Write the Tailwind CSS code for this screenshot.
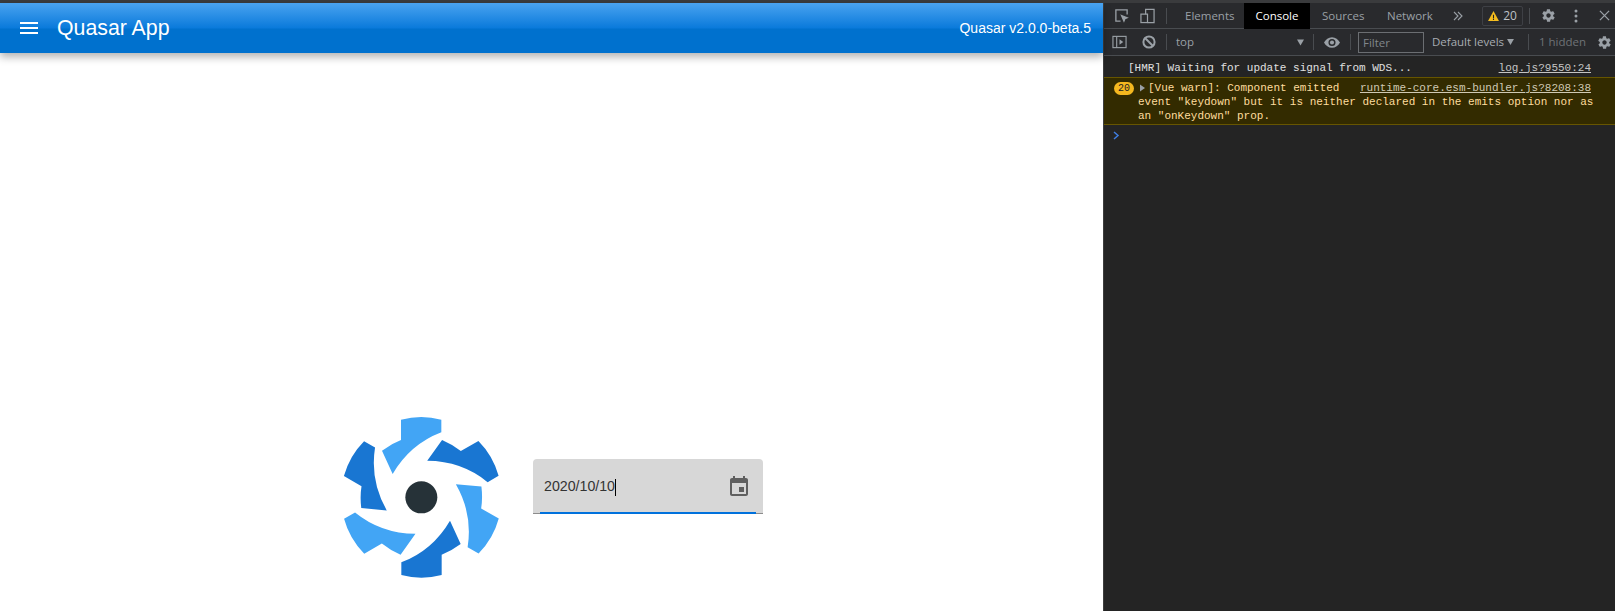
<!DOCTYPE html>
<html>
<head>
<meta charset="utf-8">
<script src="https://cdn.jsdelivr.net/npm/@tailwindcss/browser@4"></script>
</head>
<body class="m-0 overflow-hidden">
<div class="w-[1615px] h-[611px] flex flex-col overflow-hidden bg-white font-['Liberation_Sans',Arial,sans-serif]">
  <div class="h-[3px] shrink-0 bg-[#3a3b3d]"></div>
  <div class="flex flex-1 min-h-0">
    <!-- page -->
    <div class="w-[1103px] shrink-0 flex flex-col">
      <header class="relative z-10 h-[50px] shrink-0 flex items-center text-white bg-[linear-gradient(to_bottom,#4aa3f0_0%,#0a7adb_50%,#0071ce_52%,#0071ce_100%)] shadow-[0_4px_8px_rgba(0,0,0,0.3)]">
        <svg class="ml-[17px] w-[24px] h-[24px]" viewBox="0 0 24 24" fill="#fff"><path d="M3 18h18v-2H3v2zm0-5h18v-2H3v2zm0-7v2h18V6H3z"/></svg>
        <div class="ml-[16px] text-[21.3px] leading-[28px]">Quasar App</div>
        <div class="ml-auto mr-[12px] text-[14px] leading-[20px]">Quasar v2.0.0-beta.5</div>
      </header>
      <main class="flex-1 flex items-start pl-[330px] pt-[352px]">
        <svg class="w-[180px] h-[180px] shrink-0" viewBox="0 0 540 540">
          <defs>
            <path id="blade" d="M213 44 Q274 28 334 44 L334 82 Q240 118 188 207 L156 137 Q184 116 213 105 Z"/>
          </defs>
          <use href="#blade" fill="#42a5f5"/>
          <use href="#blade" fill="#1976d2" transform="rotate(60 274 277)"/>
          <use href="#blade" fill="#42a5f5" transform="rotate(120 274 277)"/>
          <use href="#blade" fill="#1976d2" transform="rotate(180 274 277)"/>
          <use href="#blade" fill="#42a5f5" transform="rotate(240 274 277)"/>
          <use href="#blade" fill="#1976d2" transform="rotate(300 274 277)"/>
          <circle cx="274" cy="277" r="48" fill="#263238"/>
        </svg>
        <div class="ml-[23px] mt-[54px] w-[230px] h-[55px] flex flex-col rounded-t-[4px] bg-[#d7d7d7] border-b border-[#8c8c8c]">
          <div class="flex-1 flex items-center pl-[11px] pr-[12px] pt-[3px] text-[14.2px] text-[#333]">
            <span>2020/10/10</span><span class="w-px h-[17px] bg-black"></span>
            <svg class="ml-auto w-[24px] h-[24px]" viewBox="0 0 24 24" fill="#5f5f5f"><path d="M17 12h-5v5h5v-5zM16 1v2H8V1H6v2H5c-1.1 0-2 .9-2 2v14c0 1.1.9 2 2 2h14c1.1 0 2-.9 2-2V5c0-1.1-.9-2-2-2h-1V1h-2zm3 18H5V8h14v11z"/></svg>
          </div>
          <div class="h-[2px] mx-[7px] -mb-px bg-[#0071dc]"></div>
        </div>
      </main>
    </div>
    <!-- devtools -->
    <div class="flex-1 min-w-0 flex flex-col bg-[#242424] border-l border-[#3d3d3d] text-[11.5px] whitespace-nowrap text-[#9aa0a6] font-['Open_Sans','Noto_Sans',sans-serif]">
      <div class="h-[26px] shrink-0 flex items-center bg-[#292a2d] border-b border-[#494c50]">
        <svg class="ml-[10px] w-[15px] h-[15px] shrink-0" viewBox="0 0 16 16" fill="none" stroke="#9aa0a6" stroke-width="1.4"><path d="M7 14H2V2h12v5"/><path d="M8 8l6 2.4-2.4 1 -1 2.6z" fill="#9aa0a6"/></svg>
        <svg class="ml-[11px] w-[15px] h-[16px] shrink-0" viewBox="0 0 16 16" fill="none" stroke="#9aa0a6" stroke-width="1.3"><path d="M6 6V1h9v14H8"/><rect x="1" y="6" width="7" height="9"/></svg>
        <div class="ml-[11px] w-px h-[16px] shrink-0 bg-[#494c50]"></div>
        <div class="ml-[18px] w-[59px] shrink-0 leading-[25px]">Elements</div>
        <div class="w-[66px] h-[26px] self-start shrink-0 leading-[25px] text-center bg-black text-white">Console</div>
        <div class="ml-[12px] w-[65px] shrink-0 leading-[25px]">Sources</div>
        <div class="w-[66px] shrink-0 leading-[25px]">Network</div>
        <svg class="w-[10px] h-[12px] shrink-0" viewBox="0 0 10 12" fill="none" stroke="#9aa0a6" stroke-width="1.1"><path d="M1 2l4 4-4 4M5 2l4 4-4 4"/></svg>
        <div class="ml-[19px] w-[41px] h-[20px] shrink-0 flex items-center justify-center gap-[4px] rounded-[2px] border border-[#3e4045] text-[12px] text-[#bdc1c6]">
          <svg class="w-[11px] h-[10px]" viewBox="0 0 12 11"><path d="M6 0l6 11H0z" fill="#f5bd1f"/><path d="M5.4 4h1.2v4H5.4zM5.4 8.6h1.2v1.2H5.4z" fill="#222"/></svg>
          <span>20</span>
        </div>
        <div class="ml-[6px] w-px h-[16px] shrink-0 bg-[#494c50]"></div>
        <svg class="ml-[11px] w-[15px] h-[15px] shrink-0" viewBox="0 0 24 24" fill="#9aa0a6"><path d="M19.4 13c0-.3.1-.6.1-1s0-.7-.1-1l2.1-1.6c.2-.2.2-.4.1-.6l-2-3.5c-.1-.2-.4-.3-.6-.2l-2.5 1c-.5-.4-1.1-.7-1.7-1l-.4-2.6c0-.3-.2-.5-.5-.5h-4c-.2 0-.5.2-.5.4l-.4 2.7c-.6.2-1.1.6-1.7 1l-2.5-1c-.2-.1-.5 0-.6.2l-2 3.5c-.1.2-.1.4.1.6L4.6 11c0 .3-.1.6-.1 1s0 .7.1 1l-2.1 1.6c-.2.2-.2.4-.1.6l2 3.5c.1.2.4.3.6.2l2.5-1c.5.4 1.1.7 1.7 1l.4 2.6c0 .3.2.5.5.5h4c.2 0 .5-.2.5-.4l.4-2.7c.6-.2 1.1-.6 1.7-1l2.5 1c.2.1.5 0 .6-.2l2-3.5c.1-.2.1-.4-.1-.6L19.4 13zM12 15.5c-1.9 0-3.5-1.6-3.5-3.5s1.6-3.5 3.5-3.5 3.5 1.6 3.5 3.500-1.6 3.500-3.500 3.500z"/></svg>
        <svg class="ml-[15px] w-[10px] h-[16px] shrink-0" viewBox="0 0 10 16" fill="#9aa0a6"><circle cx="5" cy="3" r="1.5"/><circle cx="5" cy="8" r="1.5"/><circle cx="5" cy="13" r="1.5"/></svg>
        <svg class="ml-[18px] w-[11px] h-[11px] shrink-0" viewBox="0 0 12 12" stroke="#9aa0a6" stroke-width="1.4"><path d="M1 1l10 10M11 1L1 11"/></svg>
      </div>
      <div class="h-[27px] shrink-0 flex items-center bg-[#292a2d] border-b border-[#494c50]">
        <svg class="ml-[8px] w-[15px] h-[14px] shrink-0" viewBox="0 0 16 14" fill="none" stroke="#9aa0a6" stroke-width="1.2"><rect x="1" y="1" width="14" height="12"/><path d="M5 1v12"/><path d="M8 4l4 3-4 3z" fill="#9aa0a6" stroke="none"/></svg>
        <svg class="ml-[15px] w-[14px] h-[14px] shrink-0" viewBox="0 0 14 14" fill="none" stroke="#9aa0a6" stroke-width="2"><circle cx="7" cy="7" r="5.6"/><path d="M3 3l8 8"/></svg>
        <div class="ml-[10px] w-px h-[16px] shrink-0 bg-[#494c50]"></div>
        <div class="ml-[9px] w-[121px] shrink-0">top</div>
        <svg class="w-[7px] h-[7px] shrink-0" viewBox="0 0 8 7" fill="#9aa0a6"><path d="M0 0h8L4 7z"/></svg>
        <div class="ml-[9px] w-px h-[16px] shrink-0 bg-[#494c50]"></div>
        <svg class="ml-[10px] w-[16px] h-[11px] shrink-0" viewBox="0 0 18 12" fill="#9aa0a6"><path d="M9 0C5 0 2 2.500 0 6c2 3.500 5 6 9 6s7-2.500 9-6c-2-3.500-5-6-9-6zm0 10a4 4 0 1 1 0-8 4 4 0 0 1 0 8z"/><circle cx="9" cy="6" r="2.300"/></svg>
        <div class="ml-[10px] w-px h-[16px] shrink-0 bg-[#494c50]"></div>
        <div class="ml-[7px] w-[66px] h-[21px] shrink-0 pl-[4px] leading-[20px] border border-[#6b6e72] text-[#80868b]">Filter</div>
        <div class="ml-[8px] w-[71px] shrink-0 text-[#a8adb2]">Default levels</div>
        <svg class="ml-[4px] w-[7px] h-[6px] shrink-0" viewBox="0 0 8 7" fill="#9aa0a6"><path d="M0 0h8L4 7z"/></svg>
        <div class="ml-[14px] w-px h-[16px] shrink-0 bg-[#494c50]"></div>
        <div class="ml-[10px] w-[58px] shrink-0 text-[#6f7377]">1 hidden</div>
        <svg class="w-[15px] h-[15px] shrink-0" viewBox="0 0 24 24" fill="#9aa0a6"><path d="M19.4 13c0-.3.1-.6.1-1s0-.7-.1-1l2.1-1.6c.2-.2.2-.4.1-.6l-2-3.500c-.1-.2-.4-.3-.6-.2l-2.500 1c-.5-.4-1.100-.7-1.700-1l-.4-2.600c0-.3-.2-.5-.5-.5h-4c-.2 0-.5.2-.5.4l-.4 2.700c-.6.2-1.100.6-1.700 1l-2.500-1c-.2-.1-.5 0-.6.2l-2 3.500c-.1.2-.1.4.1.6L4.600 11c0 .3-.1.6-.1 1s0 .7.1 1l-2.100 1.600c-.2.2-.2.4-.1.6l2 3.500c.1.2.4.3.6.2l2.500-1c.5.4 1.100.7 1.700 1l.4 2.600c0 .3.2.5.5.5h4c.2 0 .5-.2.5-.4l.4-2.700c.6-.2 1.100-.6 1.700-1l2.500 1c.2.1.5 0 .6-.2l2-3.500c.1-.2.1-.4-.1-.6L19.400 13zM12 15.500c-1.900 0-3.500-1.600-3.500-3.500s1.600-3.500 3.500-3.500 3.500 1.600 3.500 3.500-1.600 3.500-3.500 3.500z"/></svg>
      </div>
      <div class="font-['Liberation_Mono',monospace] text-[11px] leading-[14px]">
        <div class="h-[21px] flex items-center pt-[2px] pl-[24px] pr-[24px] text-[#e0e0e0]">
          <span>[HMR] Waiting for update signal from WDS...</span>
          <span class="ml-auto underline text-[#c4c4c4]">log.js?9550:24</span>
        </div>
        <div class="h-[48px] bg-[#332b00] border-y border-[#665500] text-[#ffdd9e] pl-[34px] pr-[24px] relative pt-[3px]">
          <div class="absolute left-[10px] top-[4px] w-[20px] h-[13px] rounded-full bg-[#f5b81f] text-[#222] text-center text-[10px] leading-[13px]">20</div>
          <div class="flex">
            <svg class="w-[6px] h-[14px] ml-[2px] mr-[2px] shrink-0" viewBox="0 0 6 14" fill="#9aa0a6"><path d="M0 3.500l5 3.500-5 3.500z"/></svg>
            <span>[Vue warn]: Component emitted</span>
            <span class="ml-auto underline text-[#d0c9b4]">runtime-core.esm-bundler.js?8208:38</span>
          </div>
          <div>event "keydown" but it is neither declared in the emits option nor as</div>
          <div>an "onKeydown" prop.</div>
        </div>
        <div class="h-[20px] flex items-center pl-[9px]">
          <svg class="w-[7px] h-[9px]" viewBox="0 0 7 9" fill="none" stroke="#3f7de0" stroke-width="1.500"><path d="M1 1l4 3.500-4 3.500"/></svg>
        </div>
      </div>
    </div>
  </div>
</div>
</body>
</html>
